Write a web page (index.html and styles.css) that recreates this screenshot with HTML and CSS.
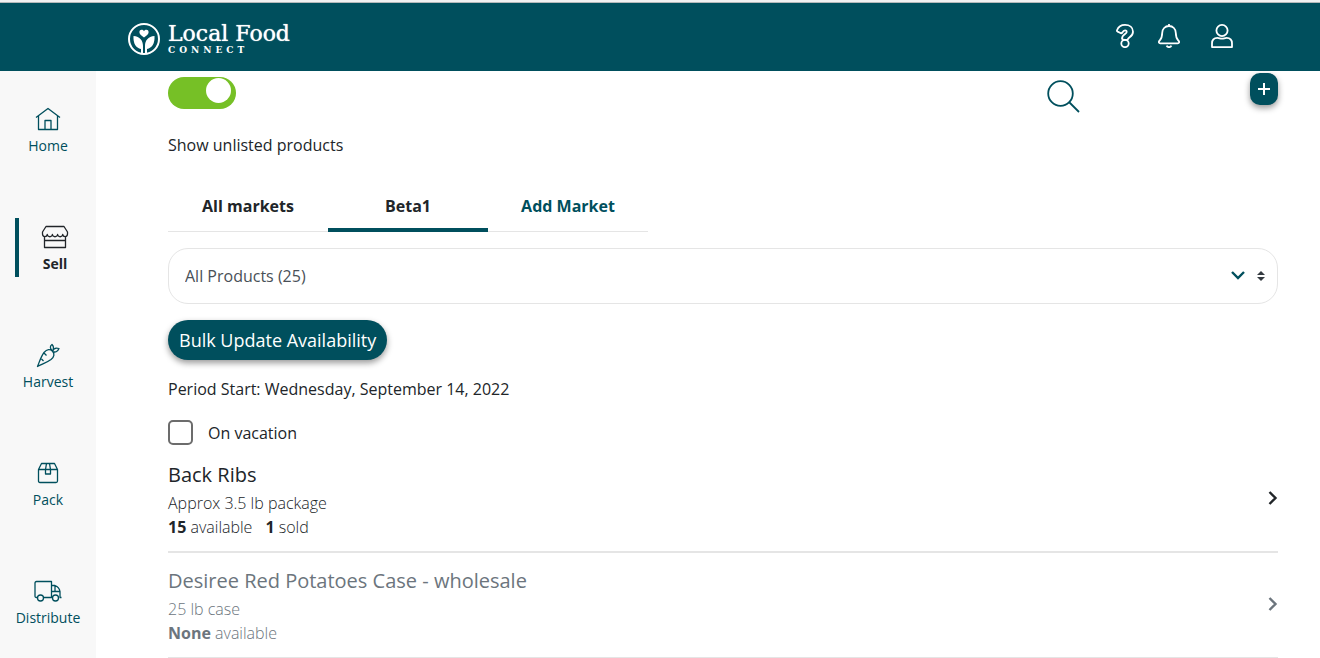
FILE: index.html
```
<!DOCTYPE html>
<html lang="en">
<head>
    <meta charset="UTF-8">
    <meta name="viewport" content="width=device-width, initial-scale=1.0">
    <title>Local Food Connect</title>
    <link rel="stylesheet" href="styles.css">
</head>
<body>
    <header class="header">
        <a href="#" class="logo">
            <svg class="logo-mark" viewBox="0 0 32 32">
                <circle cx="16" cy="16" r="15" fill="none" stroke="#fff" stroke-width="2"/>
                <path d="M16 14.500C13 12.300 11.400 10.900 11.400 9.200c0-2.800 3.400-3.100 4.600-.9 1.200-2.200 4.600-1.900 4.600.9 0 1.700-1.600 3.100-4.600 5.300z" fill="#fff"/>
                <path d="M5.500 13c6.500.5 9.500 4.500 9.500 10v7.500h-2V26C8 25 5 20.500 5.500 13z" fill="#fff"/>
                <path d="M26.500 13C20 13.500 17 17.500 17 23v7.500h2V26c5-1 8-5.500 7.500-13z" fill="#fff"/>
            </svg>
            <span class="logo-text">
                <span class="logo-name">Local Food</span>
                <span class="logo-sub">CONNECT</span>
            </span>
        </a>
        <div class="header-actions">
            <div class="header-group">
                <button type="button" class="icon-btn" aria-label="Help">
                    <svg width="18" height="24" viewBox="0 0 18 24">
                        <path d="M1 6.200C2.300 2.800 5.300.9 9 .9c4.500 0 8 2.600 8 6.800 0 5-4.700 5.600-4.900 7.300-.3 1.300-6.100 1.300-6.100-.4 0-4.400 4.700-4.600 4.700-6.600 0-2.200-3-2-4.200.4C5.600 9.600 4.800 9.400 4 8.800L1.600 7.600C1 7.200.8 6.800 1 6.200z"/>
                        <circle cx="9" cy="19.500" r="3.700"/>
                    </svg>
                </button>
                <button type="button" class="icon-btn" aria-label="Notifications">
                    <svg width="22" height="24" viewBox="0 0 22 24">
                        <path d="M11 0v2M11 2C7 2 4.200 5 4.200 9c0 5-1.400 6.300-2.700 7.700-1.200 1.300-.6 2.600.8 2.600h17.400c1.400 0 2-1.300.8-2.600-1.300-1.400-2.700-2.700-2.700-7.700 0-4-2.800-7-6.800-7zM8.600 21.600c.4 1 1.300 1.600 2.400 1.600s2-.6 2.400-1.600"/>
                    </svg>
                </button>
            </div>
            <button type="button" class="icon-btn" aria-label="Account">
                <svg width="22" height="24" viewBox="0 0 22 24">
                    <circle cx="11" cy="6.500" r="5.600"/>
                    <path d="M1 23.100v-3.600c0-3.500 2.200-5.600 5.400-5.600 1.900 0 2.600.8 4.600.8s2.700-.8 4.600-.8c3.200 0 5.400 2.100 5.400 5.600v3.600z"/>
                </svg>
            </button>
        </div>
    </header>

    <div class="layout">
        <nav class="sidebar">
            <a href="#" class="nav-item">
                <svg class="nav-icon" viewBox="0 0 28 28">
                    <path d="M2 12.500L14 3.500l12 9M4.500 11v13.500h19V11M11 24.500v-9h6v9"/>
                </svg>
                Home
            </a>
            <a href="#" class="nav-item active">
                <svg class="nav-icon" viewBox="0 0 28 28">
                    <path d="M5 3.500h18l3.500 5.500v2c0 3.200-4.200 3.400-4.800.5-.5 3-4.600 3-5.100 0-.5 3-4.700 3-5.200 0-.5 3-4.600 3-5.100 0-.6 2.900-4.800 2.700-4.800-.5V9zM3.500 13.500v11h21v-11M3.500 17.500h21"/>
                </svg>
                Sell
            </a>
            <a href="#" class="nav-item">
                <svg class="nav-icon" viewBox="0 0 28 28">
                    <path d="M3.500 25.500c2-5 3.500-10 6.500-14 3-3.500 6.300-3.600 8.500-1.300 2.300 2.400 1.800 5.700-1.500 8.300-4 3-8.700 4.500-13.500 7zM10 12l2.500 2.500M7.500 18l2 2M18.500 10.200C15.500 7 16 5 18 3.500c1.500 1.500 2.200 3.500.5 6.700 1-3 4-3.500 6.500-2.700-1.300 3.200-4 4.500-6.500 2.700z"/>
                </svg>
                Harvest
            </a>
            <a href="#" class="nav-item">
                <svg class="nav-icon" viewBox="0 0 28 28">
                    <path d="M4.500 10.500L7.500 4.500h13l3 6v11.500q0 1.500-1.500 1.500H6q-1.500 0-1.500-1.500zM4.500 10.500h19M12.500 4.500l-1 6v4.500h5v-4.500l-1-6"/>
                </svg>
                Pack
            </a>
            <a href="#" class="nav-item">
                <svg class="nav-icon" viewBox="0 0 28 28">
                    <path d="M3.500 20.500h-1q-1.500 0-1.500-1.500V6q0-1.500 1.500-1.500h15v16h-8M17.500 8.500h3.500c3 1.200 4.500 3 5 6v6M25.500 20.500h2M17.500 14.500h8.500M21 8.500v6"/>
                    <circle cx="6.500" cy="21" r="3"/>
                    <circle cx="21.500" cy="21" r="3"/>
                </svg>
                Distribute
            </a>
        </nav>

        <main class="content">
            <div class="toolbar">
                <input type="checkbox" id="unlisted" class="toggle" checked>
                <div class="toolbar-actions">
                    <button type="button" class="icon-btn search-btn" aria-label="Search">
                        <svg width="33" height="33" viewBox="0 0 33 33">
                            <circle cx="13.500" cy="13.500" r="12.300"/>
                            <path d="M22 22l10 10"/>
                        </svg>
                    </button>
                    <button type="button" class="add-btn" aria-label="Add product">
                        <svg width="14" height="14" viewBox="0 0 14 14">
                            <path d="M7 1v12M1 7h12"/>
                        </svg>
                    </button>
                </div>
            </div>
            <label for="unlisted" class="toggle-label">Show unlisted products</label>

            <div class="tabs">
                <button type="button" class="tab">All markets</button>
                <button type="button" class="tab active">Beta1</button>
                <button type="button" class="tab add">Add Market</button>
            </div>

            <div class="filter">
                <select class="filter-select" aria-label="Products">
                    <option>All Products (25)</option>
                </select>
                <span class="filter-icons">
                    <svg class="arrow" width="14" height="12" viewBox="0 0 14 12">
                        <path d="M1 2l6 6 6-6"/>
                    </svg>
                    <svg width="8" height="10" viewBox="0 0 8 10">
                        <path d="M4 0l4 4H0zM4 10l4-4H0z" fill="#343a40"/>
                    </svg>
                </span>
            </div>

            <button type="button" class="bulk-btn">Bulk Update Availability</button>

            <p class="period">Period Start: Wednesday, September 14, 2022</p>

            <div class="vacation">
                <input type="checkbox" id="vacation" class="checkbox">
                <label for="vacation">On vacation</label>
            </div>

            <div class="products">
                <a href="#" class="product">
                    <div>
                        <h2>Back Ribs</h2>
                        <p>Approx 3.5 lb package</p>
                        <p class="stock"><span><b>15</b> available</span><span><b>1</b> sold</span></p>
                    </div>
                    <svg class="chevron" width="10" height="18" viewBox="0 0 10 18">
                        <path d="M1.500 1L7.500 7l-6 6"/>
                    </svg>
                </a>
                <a href="#" class="product muted">
                    <div>
                        <h2>Desiree Red Potatoes Case - wholesale</h2>
                        <p>25 lb case</p>
                        <p class="stock"><span><b>None</b> available</span></p>
                    </div>
                    <svg class="chevron" width="10" height="18" viewBox="0 0 10 18">
                        <path d="M1.500 1L7.500 7l-6 6"/>
                    </svg>
                </a>
            </div>
        </main>
    </div>
</body>
</html>
```
FILE: styles.css
```
* {
    margin: 0;
    padding: 0;
    box-sizing: border-box;
}

body {
    display: flex;
    flex-direction: column;
    height: 100vh;
    overflow: hidden;
    background-color: #fff;
    border-top: 2px solid #f1f1f1;
    color: #212529;
    font-family: 'Open Sans', sans-serif;
    font-size: 16px;
    line-height: 24px;
}

a {
    color: inherit;
    text-decoration: none;
}

button,
select {
    border: none;
    background: none;
    font-family: inherit;
    font-size: 16px;
    cursor: pointer;
}

svg {
    display: block;
}

/* Header */
.header {
    display: flex;
    flex-shrink: 0;
    justify-content: space-between;
    align-items: center;
    height: 69px;
    padding: 0 87px 2px 128px;
    background-color: #004f5d;
    border-top: 1px solid #b4b9ba;
    color: #fff;
}

.logo {
    display: flex;
    align-items: center;
    gap: 8px;
    padding-top: 6px;
}

.logo-mark {
    width: 32px;
    height: 32px;
}

.logo-text {
    display: flex;
    flex-direction: column;
    font-family: 'DejaVu Serif', serif;
}

.logo-name {
    font-size: 22px;
    line-height: 22px;
    text-shadow: 0 0 1px #fff;
}

.logo-sub {
    font-size: 9px;
    font-weight: bold;
    line-height: 10px;
    letter-spacing: 4px;
}

.header-actions {
    display: flex;
    gap: 31px;
}

.header-group {
    display: flex;
    gap: 24px;
}

.icon-btn {
    color: #fff;
}

.icon-btn svg {
    fill: none;
    stroke: currentColor;
    stroke-width: 1.8;
    stroke-linejoin: round;
}

/* Sidebar */
.layout {
    display: flex;
    flex: 1;
    min-height: 0;
}

.sidebar {
    display: flex;
    flex-direction: column;
    flex-shrink: 0;
    gap: 59px;
    width: 96px;
    padding-top: 29px;
    background-color: #f8f8f8;
    overflow: hidden;
}

.nav-item {
    display: flex;
    flex-direction: column;
    flex-shrink: 0;
    align-items: center;
    gap: 3px;
    height: 59px;
    padding-top: 5px;
    color: #004f5d;
    font-size: 14px;
    line-height: 20px;
}

.nav-item.active {
    margin: 0 5px 0 15px;
    border-left: 4px solid #004f5d;
    color: #212529;
    font-weight: bold;
}

.nav-icon {
    width: 28px;
    height: 28px;
    fill: none;
    stroke: currentColor;
    stroke-width: 1.3;
    stroke-linejoin: round;
}

/* Content */
.content {
    flex: 1;
    padding: 2px 42px 0 72px;
    overflow-y: auto;
    scrollbar-width: none;
}

.toolbar {
    display: flex;
    justify-content: space-between;
    align-items: flex-start;
    height: 60px;
}

.toggle {
    appearance: none;
    width: 68px;
    height: 32px;
    margin-top: 4px;
    padding: 1px 5px;
    border-radius: 16px;
    background-color: #ccc;
    cursor: pointer;
}

.toggle::before {
    content: '';
    display: block;
    width: 25px;
    height: 25px;
    border-radius: 50%;
    background-color: #fff;
}

.toggle:checked {
    background-color: #76c026;
}

.toggle:checked::before {
    margin-left: auto;
}

.toolbar-actions {
    display: flex;
    align-items: flex-start;
    gap: 170px;
}

.search-btn {
    margin-top: 7px;
    color: #004f5d;
}

.add-btn {
    display: flex;
    justify-content: center;
    align-items: center;
    width: 28px;
    height: 32px;
    border-radius: 10px;
    background-color: #004f5d;
    box-shadow: 0 3px 6px rgba(0, 0, 0, 0.4);
}

.add-btn svg {
    stroke: #fff;
    stroke-width: 2;
}

.toggle-label {
    display: block;
}

.tabs {
    display: flex;
    width: 480px;
    margin-top: 23px;
}

.tab {
    flex: 1;
    height: 52px;
    border-bottom: 1px solid #e5e5e5;
    color: #212529;
    font-weight: bold;
}

.tab.active {
    padding-top: 3px;
    border-bottom: 4px solid #004f5d;
}

.tab.add {
    color: #004f5d;
}

.filter {
    position: relative;
    margin-top: 16px;
}

.filter-select {
    appearance: none;
    display: block;
    width: 100%;
    height: 56px;
    padding: 0 60px 0 16px;
    border: 1px solid #e5e5e5;
    border-radius: 20px;
    color: #495057;
}

.filter-icons {
    position: absolute;
    top: 0;
    right: 13px;
    display: flex;
    align-items: center;
    gap: 12px;
    height: 56px;
    pointer-events: none;
}

.arrow {
    fill: none;
    stroke: #004f5d;
    stroke-width: 2.4;
}

.bulk-btn {
    display: block;
    height: 40px;
    margin-top: 16px;
    padding: 0 11px;
    border-radius: 20px;
    background-color: #004f5d;
    box-shadow: 0 3px 6px rgba(0, 0, 0, 0.4);
    color: #fff;
    font-size: 18px;
}

.period {
    margin-top: 17px;
}

.vacation {
    display: flex;
    align-items: center;
    gap: 15px;
    margin-top: 19px;
}

.checkbox {
    appearance: none;
    width: 25px;
    height: 25px;
    border: 2px solid #6c6c6c;
    border-radius: 5px;
}

.checkbox:checked {
    background-color: #004f5d;
}

.products {
    margin-top: 2px;
}

.product {
    display: flex;
    justify-content: space-between;
    align-items: center;
    padding: 14px 0 12px;
    border-bottom: 2px solid #e5e5e5;
}

.product h2 {
    margin-bottom: 2px;
    font-size: 20px;
    font-weight: normal;
    line-height: 28px;
}

.product p {
    font-weight: 300;
}

.product b {
    font-weight: bold;
}

.stock {
    display: flex;
    gap: 13px;
}

.muted {
    color: #6c757d;
}

.chevron {
    fill: none;
    stroke: currentColor;
    stroke-width: 2.4;
}
```
